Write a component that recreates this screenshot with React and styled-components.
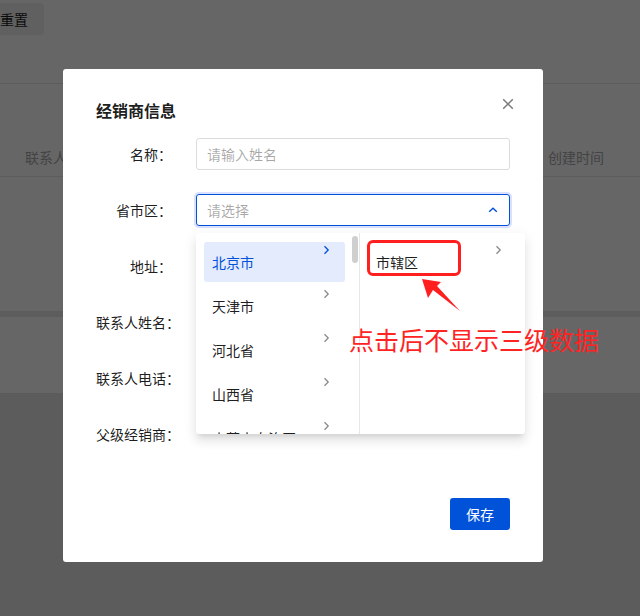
import styled, { createGlobalStyle } from 'styled-components';

const GlobalStyle = createGlobalStyle`
  * { box-sizing: border-box; }
  body {
    margin: 0;
    font-family: "Noto Sans CJK SC", "Noto Sans", sans-serif;
    font-size: 14px;
  }
`;

// only the part of the province list that is scrolled into view
const PROVINCES = ['北京市', '天津市', '河北省', '山西省', '内蒙古自治区'];

const Page = styled.div`
  position: relative;
  width: 640px;
  height: 616px;
  overflow: hidden;
  background: #ffffff;
`;

const Toolbar = styled.div`
  height: 84px;
  padding-top: 3px;
  border-bottom: 1px solid #e8e8e8;
`;

const GhostButton = styled.div`
  display: inline-flex;
  align-items: center;
  height: 32px;
  margin-left: -16px;
  padding: 0 16px;
  border-radius: 4px;
  background: #efefef;
  color: rgba(0, 0, 0, 0.9);
`;

const TableHead = styled.div`
  display: flex;
  justify-content: space-between;
  align-items: center;
  height: 39px;
  margin-top: 54px;
  padding: 0 36px 0 25px;
  border-bottom: 1px solid #e8e8e8;
  color: #a8a8a8;
`;

const TableBody = styled.div`
  height: 134px;
`;

const Band = styled.div`
  height: 6px;
  background: #e9e9e9;
`;

const TableRow = styled.div`
  height: 77px;
  border-bottom: 1px solid #e4e4e4;
`;

const Footer = styled.div`
  height: 240px;
  background: #e7e7e7;
`;

const Overlay = styled.div`
  position: absolute;
  inset: 0;
  background: rgba(0, 0, 0, 0.6);
`;

const Modal = styled.div`
  position: relative;
  width: 480px;
  margin: 69px 0 0 63px;
  padding: 29px 33px 32px;
  background: #ffffff;
  border-radius: 3px;
`;

const Title = styled.div`
  font-size: 16px;
  font-weight: 700;
  line-height: 24px;
  color: rgba(0, 0, 0, 0.9);
`;

const CloseButton = styled.div`
  position: absolute;
  top: 27px;
  right: 27px;
  width: 16px;
  height: 16px;
  display: flex;
`;

const Form = styled.div`
  margin-top: 16px;
  display: flex;
  flex-direction: column;
  gap: 24px;
`;

const FormRow = styled.div`
  display: flex;
  align-items: center;
  height: 32px;
`;

const Label = styled.div`
  flex-shrink: 0;
  width: 76px;
  margin-right: 24px;
  text-align: right;
  white-space: nowrap;
  color: rgba(0, 0, 0, 0.9);
`;

const Field = styled.div`
  flex: 1;
  display: flex;
  align-items: center;
  justify-content: space-between;
  height: 32px;
  padding: 0 10px;
  border: 1px solid ${(p) => (p.$focused ? '#0052d9' : '#dcdcdc')};
  border-radius: 3px;
  box-shadow: ${(p) => (p.$focused ? '0 0 0 2px #d9e1ff' : 'none')};
  color: rgba(0, 0, 0, 0.35);
`;

const Actions = styled.div`
  display: flex;
  justify-content: flex-end;
  margin-top: 48px;
`;

const PrimaryButton = styled.div`
  display: flex;
  align-items: center;
  height: 32px;
  padding: 0 16px;
  border-radius: 3px;
  background: #0052d9;
  color: #ffffff;
`;

const Popup = styled.div`
  position: absolute;
  left: 133px;
  top: 164px;
  display: flex;
  width: 329px;
  height: 201px;
  background: #ffffff;
  border-radius: 3px;
  box-shadow: 0 3px 14px 2px rgba(0, 0, 0, 0.05), 0 8px 10px 1px rgba(0, 0, 0, 0.06),
    0 5px 5px -3px rgba(0, 0, 0, 0.1);
`;

const Column = styled.div`
  position: relative;
  width: ${(p) => p.$width}px;
  height: 100%;
  overflow: hidden;
  padding: 9px ${(p) => (p.$scroll ? 14 : 8)}px 0 8px;
  border-right: ${(p) => (p.$scroll ? '1px solid #e7e7e7' : 'none')};
`;

const ScrollThumb = styled.div`
  position: absolute;
  top: 3px;
  right: 1px;
  width: 6px;
  height: 27px;
  border-radius: 3px;
  background: #cfcfcf;
`;

const Option = styled.div`
  display: flex;
  justify-content: space-between;
  align-items: center;
  height: 40px;
  margin-bottom: 4px;
  padding: 0 13px 0 8px;
  border-radius: 3px;
  background: ${(p) => (p.$active ? '#e3ebfd' : 'transparent')};
  color: ${(p) => (p.$active ? '#0052d9' : 'rgba(0, 0, 0, 0.9)')};
  white-space: nowrap;

  svg {
    align-self: flex-start;
    margin-top: 2px;
    flex-shrink: 0;
  }
`;

const Annotation = styled.div`
  position: absolute;
  inset: 0;
  pointer-events: none;
`;

const RedBox = styled.div`
  position: absolute;
  left: 367px;
  top: 240px;
  width: 94px;
  height: 36px;
  border: 3px solid #ff1f1f;
  border-radius: 6px;
`;

const ArrowMark = styled.svg`
  position: absolute;
  left: 410px;
  top: 270px;
`;

const Note = styled.div`
  position: absolute;
  left: 349px;
  top: 326px;
  font-size: 25px;
  line-height: 26px;
  color: #ff2424;
  white-space: nowrap;
`;

const Chevron = ({ color = '#8a8a8a' }) => (
  <svg width="12" height="12" viewBox="0 0 12 12">
    <polyline points="4.5,2.2 8.2,6 4.5,9.8" fill="none" stroke={color} strokeWidth="1.3" />
  </svg>
);

const App = () => {
  return (
    <Page>
      <GlobalStyle />
      <Toolbar>
        <GhostButton>重置</GhostButton>
      </Toolbar>
      <TableHead>
        <span>联系人</span>
        <span>创建时间</span>
      </TableHead>
      <TableBody />
      <Band />
      <TableRow />
      <Footer />

      <Overlay>
        <Modal>
          <Title>经销商信息</Title>
          <CloseButton>
            <svg width="16" height="16" viewBox="0 0 16 16">
              <path d="M3.2 3.2 L12.8 12.8 M12.8 3.2 L3.2 12.8" stroke="#7a7a7a" strokeWidth="1.5" />
            </svg>
          </CloseButton>
          <Form>
            <FormRow>
              <Label>名称：</Label>
              <Field>请输入姓名</Field>
            </FormRow>
            <FormRow>
              <Label>省市区：</Label>
              <Field $focused>
                请选择
                <svg width="12" height="12" viewBox="0 0 12 12">
                  <polyline points="2.2,7.8 6,4.2 9.8,7.8" fill="none" stroke="#0052d9" strokeWidth="1.4" />
                </svg>
              </Field>
            </FormRow>
            <FormRow>
              <Label>地址：</Label>
            </FormRow>
            <FormRow>
              <Label>联系人姓名：</Label>
            </FormRow>
            <FormRow>
              <Label>联系人电话：</Label>
            </FormRow>
            <FormRow>
              <Label>父级经销商：</Label>
            </FormRow>
          </Form>
          <Actions>
            <PrimaryButton>保存</PrimaryButton>
          </Actions>

          <Popup>
            <Column $width={164} $scroll>
              {PROVINCES.map((name, i) => (
                <Option key={name} $active={i === 0}>
                  {name}
                  <Chevron color={i === 0 ? '#0052d9' : '#8a8a8a'} />
                </Option>
              ))}
              <ScrollThumb />
            </Column>
            <Column $width={165}>
              <Option>
                市辖区
                <Chevron />
              </Option>
            </Column>
          </Popup>
        </Modal>
      </Overlay>

      <Annotation>
        <RedBox />
        <ArrowMark width="56" height="48" viewBox="0 0 56 48">
          <polygon points="12,9 31,12 27,16 50,41 23,20 18,28" fill="#ff1f1f" />
        </ArrowMark>
        <Note>点击后不显示三级数据</Note>
      </Annotation>
    </Page>
  );
};

export default App;
